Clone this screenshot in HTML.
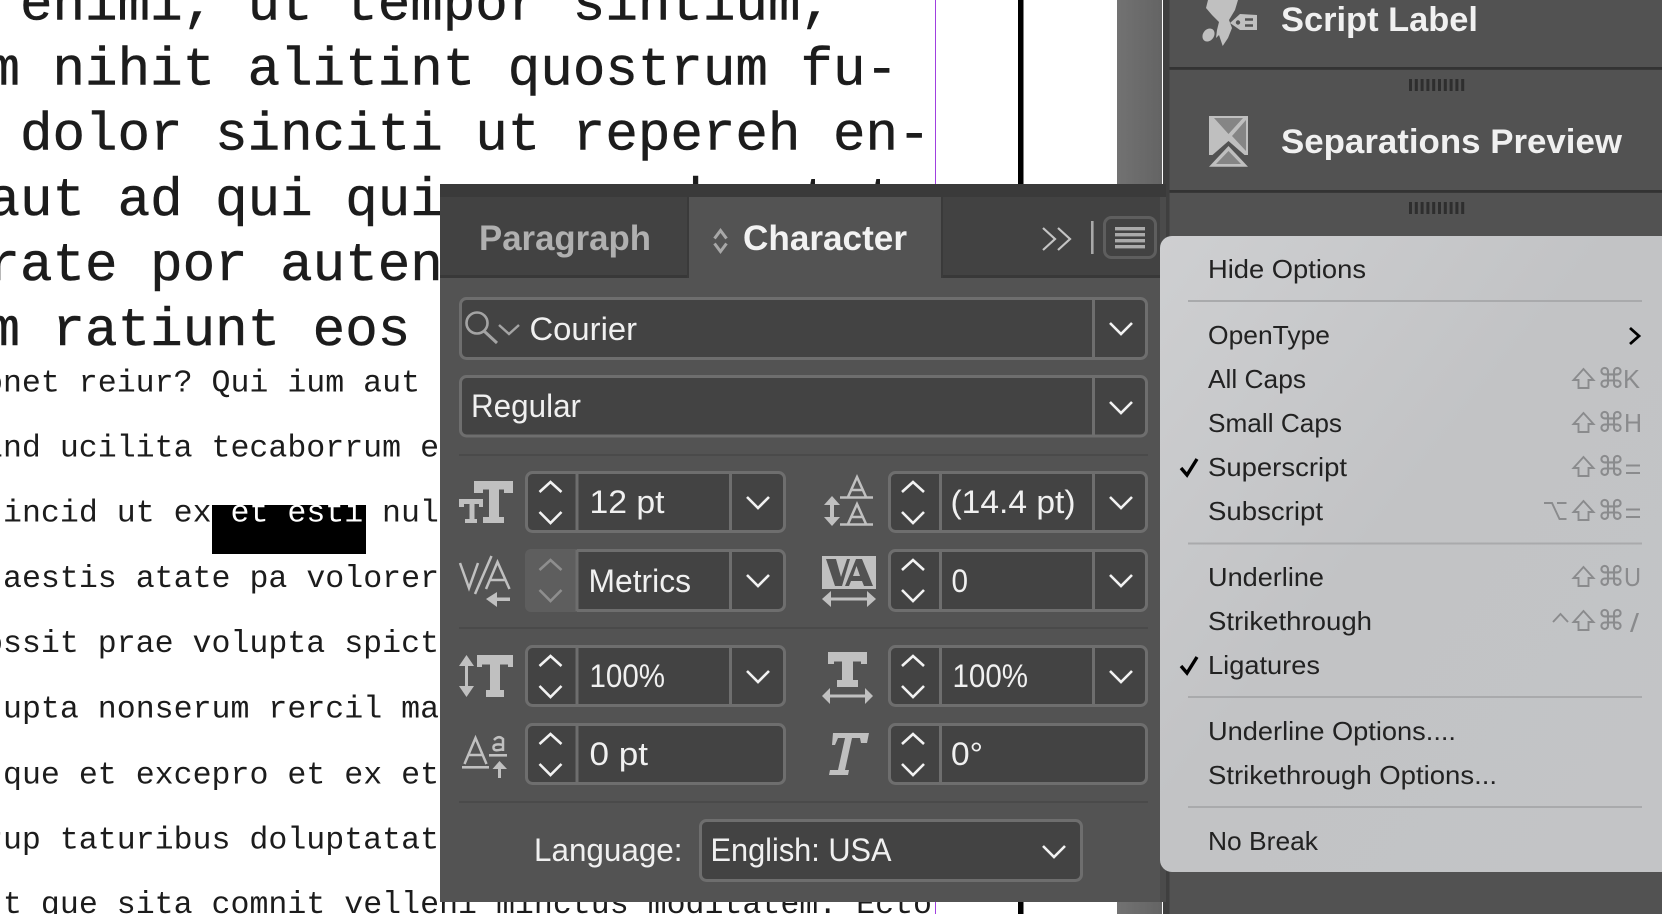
<!DOCTYPE html>
<html><head><meta charset="utf-8"><title>Character panel</title>
<style>
html,body{margin:0;padding:0;background:#fff;width:1662px;height:914px;overflow:hidden}
svg{display:block}
.m{font-family:"Liberation Mono",monospace;fill:#1c1c1c}
.b{font-size:54.2px;stroke:#1c1c1c;stroke-width:.5px}
.s{font-size:31.6px}
.u{font-family:"Liberation Sans",sans-serif;font-size:32px;fill:#f0f0f0}
.t{font-family:"Liberation Sans",sans-serif;font-size:35px;font-weight:700}
.p{font-family:"Liberation Sans",sans-serif;font-size:34px;font-weight:700;fill:#f0f0f0}
.i{font-family:"Liberation Sans",sans-serif;font-size:26px;fill:#222}
.k{font-family:"Liberation Sans",sans-serif;font-size:26px;fill:#8a8b8d}
.c{font-family:"DejaVu Sans",sans-serif;font-size:28px;fill:#8a8b8d}
.f{fill:#434343;stroke:#6e6e6e;stroke-width:3}
.l{stroke:#6e6e6e;stroke-width:3;fill:none}
.w{fill:none;stroke:#f2f2f2;stroke-width:2.6}
.g{fill:#c0c0c0}
.gs{fill:none;stroke:#c0c0c0;stroke-width:2.5}
.d{fill:#a9aaac}
.sc{fill:none;stroke:#8a8b8d;stroke-width:1.9}
</style></head>
<body>
<svg width="1662" height="914" viewBox="0 0 1662 914" xmlns="http://www.w3.org/2000/svg">
<defs><linearGradient id="mg" x1="0" y1="0" x2="1" y2="1"><stop offset="0" stop-color="#cecfd1"/><stop offset=".45" stop-color="#c2c3c5"/><stop offset="1" stop-color="#c3c4c6"/></linearGradient>
<linearGradient id="gg" x1="0" y1="0" x2="1" y2="0"><stop offset="0" stop-color="#727272"/><stop offset="1" stop-color="#646464"/></linearGradient></defs>

<rect width="1662" height="914" fill="#fff"/>
<!-- page text -->
<text class="m b" x="20" y="19.500">enimi, ut tempor sintium,</text>
<text class="m b" x="-12.500" y="84.500">m nihit alitint quostrum fu-</text>
<text class="m b" x="20" y="149.500">dolor sinciti ut repereh en-</text>
<text class="m b" x="-12.500" y="215">aut ad qui quia rnam doret t</text>
<text class="m b" x="-12.500" y="280">rate por autenim</text>
<text class="m b" x="-12.500" y="345">m ratiunt eos</text>
<text class="m s" x="-16" y="391.500">onet reiur? Qui ium aut</text>
<text class="m s" x="-16" y="456.500">ind ucilita tecaborrum e</text>
<rect x="212" y="505" width="154" height="49" fill="#000"/>
<text class="m s" x="3" y="521.500">incid ut ex</text>
<text class="m s" x="230.500" y="521.500" style="fill:#fff">et esti</text>
<text class="m s" x="382" y="521.500">nul</text>
<text class="m s" x="3" y="587">aestis atate pa volorer</text>
<text class="m s" x="-16" y="652">ossit prae volupta spict</text>
<text class="m s" x="3" y="717.500">upta nonserum rercil ma</text>
<text class="m s" x="3" y="783.500">que et excepro et ex et</text>
<text class="m s" x="-16" y="848.500">rup taturibus doluptatat</text>
<text class="m s" x="3" y="913">t que sita comnit velleni minctus moditatem. Ecto</text>

<!-- guides and pasteboard -->
<rect x="935" y="0" width="1" height="914" fill="#a040e0"/>
<rect x="1018" y="0" width="5.500" height="914" fill="#000"/>
<rect x="1117" y="0" width="45" height="914" fill="url(#gg)"/>
<rect x="1162" y="0" width="1.200" height="914" fill="#fff"/>
<rect x="1163" y="0" width="6.500" height="914" fill="#3f3f3f"/>

<!-- right dock -->
<rect x="1169.500" y="0" width="493" height="914" fill="#525252"/>
<rect x="1169.500" y="67" width="493" height="2.800" fill="#333"/>
<rect x="1169.500" y="190" width="493" height="2.800" fill="#333"/>
<path d="M1410.500 79v12M1416.300 79v12M1422.100 79v12M1427.900 79v12M1433.700 79v12M1439.500 79v12M1445.300 79v12M1451.100 79v12M1456.900 79v12M1462.700 79v12" stroke="#2e2e2e" stroke-width="3" fill="none"/>
<path d="M1410.500 202v12M1416.300 202v12M1422.100 202v12M1427.900 202v12M1433.700 202v12M1439.500 202v12M1445.300 202v12M1451.100 202v12M1456.900 202v12M1462.700 202v12" stroke="#2e2e2e" stroke-width="3" fill="none"/>
<text class="p" x="1281" y="31" textLength="197" lengthAdjust="spacingAndGlyphs">Script Label</text>
<text class="p" x="1281" y="153" textLength="341" lengthAdjust="spacingAndGlyphs">Separations Preview</text>
<!-- script label icon -->
<path class="g" d="M1208 0H1238L1235 10L1229 20L1232 28L1228 38L1222.700 46L1219 35L1216 38L1217 30L1219 22L1212 15L1206 8Z"/>
<ellipse class="g" cx="1208.500" cy="35" rx="5.500" ry="7" transform="rotate(35 1208.500 35)"/>
<path class="g" d="M1230 23L1240 14L1257 15V30H1240Z"/>
<circle cx="1238" cy="22.500" r="2.200" fill="#525252"/>
<path d="M1245 19.500h8M1245 25.500h8" stroke="#525252" stroke-width="2.500"/>
<!-- separations icon -->
<rect x="1209" y="116" width="39" height="39" fill="#bfbfbf"/>
<path d="M1214 118H1243L1228.500 134Z" fill="#858585"/>
<path d="M1246 120V151L1232 136Z" fill="#858585"/>
<path d="M1228.500 141L1209 158V155H1248V158Z" fill="#525252"/>
<path d="M1228.500 146L1209 166.700H1248Z" fill="#bfbfbf"/>
<path d="M1228.500 151L1216 164H1241Z" fill="#858585"/>

<!-- character panel -->
<rect x="440" y="184" width="726" height="718" fill="#535353"/>
<rect x="440" y="184" width="726" height="13" fill="#3a3a3a"/>
<rect x="440" y="197" width="249" height="81" fill="#424242"/>
<rect x="941" y="197" width="219" height="81" fill="#424242"/>
<rect x="440" y="275" width="249" height="3" fill="#383838"/>
<rect x="941" y="275" width="219" height="3" fill="#383838"/>
<rect x="687" y="197" width="2" height="81" fill="#3a3a3a"/>
<rect x="941" y="197" width="2" height="81" fill="#3a3a3a"/>
<rect x="1160" y="197" width="6" height="705" fill="#4b4b4b"/>
<text class="t" x="479" y="250" fill="#b0b0b0" textLength="172" lengthAdjust="spacingAndGlyphs">Paragraph</text>
<text class="t" x="743" y="250" fill="#f2f2f2" textLength="164" lengthAdjust="spacingAndGlyphs">Character</text>
<path d="M714.500 238.500L720.500 230.500L726.500 238.500M714.500 243.500L720.500 251.500L726.500 243.500" fill="none" stroke="#a8a8a8" stroke-width="3"/>
<path d="M1043 228L1055 239L1043 250M1058 228L1070 239L1058 250" fill="none" stroke="#c4c4c4" stroke-width="2.200"/>
<rect x="1091" y="221" width="2.600" height="33" fill="#a8a8a8"/>
<rect x="1104.500" y="217.500" width="51" height="40" rx="7" fill="#424242" stroke="#5e5e5e" stroke-width="3"/>
<rect x="1115" y="227" width="30" height="3.400" fill="#aaa"/><rect x="1115" y="233" width="30" height="3.400" fill="#aaa"/><rect x="1115" y="239" width="30" height="3.400" fill="#aaa"/><rect x="1115" y="245" width="30" height="3.400" fill="#aaa"/>

<!-- font family -->
<rect class="f" x="460.500" y="298.500" width="686" height="60" rx="6"/>
<path class="l" d="M1093.500 298v61"/>
<circle cx="477" cy="323" r="10.500" fill="none" stroke="#a4a4a4" stroke-width="2.600"/>
<path d="M484 331L497 343" stroke="#a4a4a4" stroke-width="3" fill="none"/>
<path d="M499 325L509 334L519 325" stroke="#a4a4a4" stroke-width="2.400" fill="none"/>
<text class="u" x="529.500" y="340" textLength="107.500" lengthAdjust="spacingAndGlyphs">Courier</text>
<path class="w" d="M1110 323L1121 334L1132 323"/>
<!-- style -->
<rect class="f" x="460.500" y="376.500" width="686" height="59.500" rx="6"/>
<path class="l" d="M1093.500 376v60"/>
<text class="u" x="471" y="417" textLength="110" lengthAdjust="spacingAndGlyphs">Regular</text>
<path class="w" d="M1110 402L1121 413L1132 402"/>
<rect x="459" y="454" width="689" height="2" fill="#4a4a4a"/>

<!-- row 1 -->
<rect class="f" x="526.500" y="472.500" width="258" height="59" rx="6"/>
<path class="l" d="M577 472v60M730.500 472v60"/>
<path class="w" d="M539.500 492L550.500 482L561.500 492M539.500 512L550.500 523L561.500 512"/>
<text class="u" x="589.500" y="513" textLength="75" lengthAdjust="spacingAndGlyphs">12 pt</text>
<path class="w" d="M747 497L758 508L769 497"/>
<rect class="f" x="889.500" y="472.500" width="257" height="59" rx="6"/>
<path class="l" d="M940.500 472v60M1093.500 472v60"/>
<path class="w" d="M902 492L913 482L924 492M902 512L913 523L924 512"/>
<text class="u" x="950.500" y="513" textLength="125" lengthAdjust="spacingAndGlyphs">(14.4 pt)</text>
<path class="w" d="M1110 497L1121 508L1132 497"/>
<!-- row 2 -->
<rect class="f" x="526.500" y="550.500" width="258" height="60" rx="6"/>
<path d="M531 549H577V612H531A6 6 0 0 1 525 606V555A6 6 0 0 1 531 549Z" fill="#5e5e5e"/>
<path class="l" d="M577 550v61M730.500 550v61"/>
<path d="M539.500 570L550.500 560L561.500 570M539.500 590L550.500 601L561.500 590" fill="none" stroke="#8e8e8e" stroke-width="2.600"/>
<text class="u" x="588.500" y="592" textLength="102.500" lengthAdjust="spacingAndGlyphs">Metrics</text>
<path class="w" d="M747 575L758 586L769 575"/>
<rect class="f" x="889.500" y="550.500" width="257" height="60" rx="6"/>
<path class="l" d="M940.500 550v61M1093.500 550v61"/>
<path class="w" d="M902 570L913 560L924 570M902 590L913 601L924 590"/>
<text class="u" x="951.500" y="592" textLength="16.500" lengthAdjust="spacingAndGlyphs">0</text>
<path class="w" d="M1110 575L1121 586L1132 575"/>
<rect x="459" y="627" width="689" height="2" fill="#4a4a4a"/>
<!-- row 3 -->
<rect class="f" x="526.500" y="646.500" width="258" height="59" rx="6"/>
<path class="l" d="M577 646v60M730.500 646v60"/>
<path class="w" d="M539.500 666L550.500 656L561.500 666M539.500 686L550.500 697L561.500 686"/>
<text class="u" x="589.500" y="687" textLength="75.500" lengthAdjust="spacingAndGlyphs">100%</text>
<path class="w" d="M747 671L758 682L769 671"/>
<rect class="f" x="889.500" y="646.500" width="257" height="59" rx="6"/>
<path class="l" d="M940.500 646v60M1093.500 646v60"/>
<path class="w" d="M902 666L913 656L924 666M902 686L913 697L924 686"/>
<text class="u" x="952.500" y="687" textLength="75.500" lengthAdjust="spacingAndGlyphs">100%</text>
<path class="w" d="M1110 671L1121 682L1132 671"/>
<!-- row 4 -->
<rect class="f" x="526.500" y="724.500" width="258" height="59" rx="6"/>
<path class="l" d="M577 724v60"/>
<path class="w" d="M539.500 744L550.500 734L561.500 744M539.500 764L550.500 775L561.500 764"/>
<text class="u" x="589.500" y="765" textLength="58.500" lengthAdjust="spacingAndGlyphs">0 pt</text>
<rect class="f" x="889.500" y="724.500" width="257" height="59" rx="6"/>
<path class="l" d="M940.500 724v60"/>
<path class="w" d="M902 744L913 734L924 744M902 764L913 775L924 764"/>
<text class="u" x="951" y="765" textLength="32" lengthAdjust="spacingAndGlyphs">0°</text>
<rect x="459" y="801" width="689" height="2" fill="#4a4a4a"/>
<!-- language -->
<text class="u" x="534" y="861" textLength="148.500" lengthAdjust="spacingAndGlyphs">Language:</text>
<rect class="f" x="700.500" y="820.500" width="381" height="60" rx="6"/>
<text class="u" x="710.500" y="861" textLength="181" lengthAdjust="spacingAndGlyphs">English: USA</text>
<path class="w" d="M1043 846L1054 857L1065 846"/>

<!-- size icon -->
<path class="g" d="M474 481H513V493H504V489.500H499V517H504V523H483V517H489V489.500H483V493H474Z"/>
<path class="g" d="M459 499H483V507H479V504H474.500V519H477V523H465V519H469.500V504H464V507H459Z"/>
<!-- leading icon -->
<path class="gs" d="M848 497L857 477L866 497M851 490H863M840 497.500H873M848 524L857 504L866 524M851 517H863M840 524.500H873"/>
<path class="g" d="M832 496L840 505H834V517H840L832 526L824 517H830V505H824Z"/>
<!-- kerning icon -->
<path class="gs" d="M460 563L469 588L478 563M491.500 556L475 594M486 589L497.500 562L509.500 589M490 580H505"/>
<path class="g" d="M486 599L497 592V597.500H510V601H497V607Z"/>
<!-- tracking icon -->
<rect x="822" y="556" width="54" height="33" class="g"/>
<path d="M826 559H836L841 577L847 559H850V559L842 586H835ZM856 559H862L873 586H864L862 581H851L849 586H845ZM856.500 566L853 576H860Z" fill="#525252" fill-rule="evenodd"/>
<path class="g" d="M822 599L831 591V597.500H867V591L876 599L867 607V600.500H831V607Z"/>
<!-- vertical scale icon -->
<path class="g" d="M466.500 655L474 666H468V686H474L466.500 697L459 686H465V666H459Z"/>
<path class="g" d="M477 655H513V667H508V664.500H500V690H504V697H486V690H490V664.500H482V667H477Z"/>
<!-- horizontal scale icon -->
<path class="g" d="M828 652H867V664H861V661.500H853V680H858V687H837V680H842V661.500H834V664H828Z"/>
<path class="g" d="M822 696L830 688V694.500H865V688L873 696L865 704V697.500H830V704Z"/>
<!-- baseline icon -->
<path class="gs" d="M464.500 764L475.500 738L486.500 764M469 755H482"/>
<rect x="462" y="766" width="27" height="2.600" class="g"/>
<path class="gs" d="M494 740Q498.500 735 503 739V751M503 745Q493 743 493.500 748Q494 752 503 749"/>
<rect x="489" y="754" width="18" height="2.600" class="g"/>
<path class="g" d="M499.500 761L507 769H501V778H498V769H492.500Z"/>
<!-- skew icon -->
<path class="g" d="M833 733H869L867 743L861 743L860 738H852L845 770H849L848 775H829L830 770H838L845 738H838L835 745H832Z"/>

<!-- context menu -->
<path d="M1172 236H1662V872H1172A12 12 0 0 1 1160 860V248A12 12 0 0 1 1172 236Z" fill="url(#mg)"/>
<rect x="1188" y="300" width="454" height="2" class="d"/>
<rect x="1188" y="542.500" width="454" height="2" class="d"/>
<rect x="1188" y="696" width="454" height="2" class="d"/>
<rect x="1188" y="806" width="454" height="2" class="d"/>
<text class="i" x="1208" y="278" textLength="158" lengthAdjust="spacingAndGlyphs">Hide Options</text>
<text class="i" x="1208" y="344" textLength="122" lengthAdjust="spacingAndGlyphs">OpenType</text>
<text class="i" x="1208" y="388" textLength="98" lengthAdjust="spacingAndGlyphs">All Caps</text>
<text class="i" x="1208" y="432" textLength="134" lengthAdjust="spacingAndGlyphs">Small Caps</text>
<text class="i" x="1208" y="476" textLength="139" lengthAdjust="spacingAndGlyphs">Superscript</text>
<text class="i" x="1208" y="520" textLength="115" lengthAdjust="spacingAndGlyphs">Subscript</text>
<text class="i" x="1208" y="586" textLength="116" lengthAdjust="spacingAndGlyphs">Underline</text>
<text class="i" x="1208" y="630" textLength="164" lengthAdjust="spacingAndGlyphs">Strikethrough</text>
<text class="i" x="1208" y="674" textLength="112" lengthAdjust="spacingAndGlyphs">Ligatures</text>
<text class="i" x="1208" y="740" textLength="248" lengthAdjust="spacingAndGlyphs">Underline Options....</text>
<text class="i" x="1208" y="784" textLength="289" lengthAdjust="spacingAndGlyphs">Strikethrough Options...</text>
<text class="i" x="1208" y="850" textLength="110" lengthAdjust="spacingAndGlyphs">No Break</text>
<!-- chevron, checks -->
<path d="M1630 328L1639 336L1630 344" fill="none" stroke="#000" stroke-width="2.800"/>
<path d="M1181 468L1187 475L1197 459" fill="none" stroke="#000" stroke-width="3.400"/>
<path d="M1181 666L1187 673L1197 657" fill="none" stroke="#000" stroke-width="3.400"/>
<!-- shortcuts -->
<path class="sc" d="M1583.500 369L1573.500 380H1578.500V388H1588.500V380H1593.500Z"/>
<text class="c" x="1597" y="388">⌘</text>
<text class="k" x="1623" y="388" textLength="17" lengthAdjust="spacingAndGlyphs">K</text>
<path class="sc" d="M1583.500 413L1573.500 424H1578.500V432H1588.500V424H1593.500Z"/>
<text class="c" x="1597" y="432">⌘</text>
<text class="k" x="1624" y="432" textLength="18" lengthAdjust="spacingAndGlyphs">H</text>
<path class="sc" d="M1583.500 457L1573.500 468H1578.500V476H1588.500V468H1593.500Z"/>
<text class="c" x="1597" y="476">⌘</text>
<path class="sc" d="M1626 465.500h14M1626 473h14" stroke-width="2.200"/>
<path class="sc" d="M1544 503h8l7.500 16h7M1557 503h9.500"/>
<path class="sc" d="M1583.500 501L1573.500 512H1578.500V520H1588.500V512H1593.500Z"/>
<text class="c" x="1597" y="520">⌘</text>
<path class="sc" d="M1626 509.500h14M1626 517h14" stroke-width="2.200"/>
<path class="sc" d="M1583.500 567L1573.500 578H1578.500V586H1588.500V578H1593.500Z"/>
<text class="c" x="1597" y="586">⌘</text>
<text class="k" x="1624" y="586" textLength="17" lengthAdjust="spacingAndGlyphs">U</text>
<path class="sc" d="M1553 622L1560.500 614L1568 622"/>
<path class="sc" d="M1583.500 611L1573.500 622H1578.500V630H1588.500V622H1593.500Z"/>
<text class="c" x="1597" y="630">⌘</text>
<text class="k" x="1630" y="632" textLength="9" lengthAdjust="spacingAndGlyphs">/</text>
</svg>
</body></html>
